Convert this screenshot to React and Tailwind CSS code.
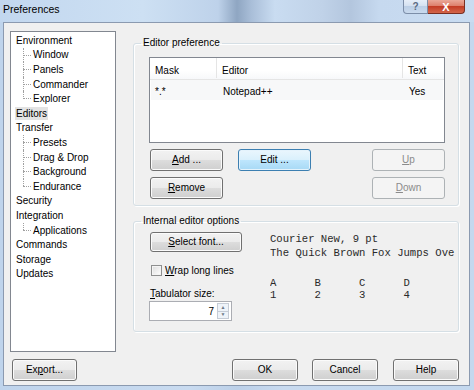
import React from "react";

const tree = [
  ["Environment", 0],
  ["Window", 1],
  ["Panels", 1],
  ["Commander", 1],
  ["Explorer", 2],
  ["Editors", 0, true],
  ["Transfer", 0],
  ["Presets", 1],
  ["Drag & Drop", 1],
  ["Background", 1],
  ["Endurance", 2],
  ["Security", 0],
  ["Integration", 0],
  ["Applications", 2],
  ["Commands", 0],
  ["Storage", 0],
  ["Updates", 0],
];

function Btn({ children, kind = "normal", className = "" }) {
  let cls =
    "border border-[#707070] rounded-[3px] bg-[linear-gradient(#f2f2f2_0%,#ebebeb_50%,#dddddd_50%,#cfcfcf_100%)] shadow-[inset_0_0_0_1px_#fbfbfb] text-black";
  if (kind === "focus")
    cls =
      "border border-[#3c7fb1] rounded-[3px] bg-[linear-gradient(#eaf6fd_0%,#d9f0fc_50%,#bee6fd_50%,#a7d9f5_100%)] shadow-[inset_0_0_0_1px_#e4f3fc] text-black";
  if (kind === "disabled")
    cls = "border border-[#adb2b5] rounded-[3px] bg-[#f4f4f4] text-[#8b8b8b]";
  return (
    <div className={`flex items-center justify-center leading-[12px] ${cls} ${className}`}>
      {children}
    </div>
  );
}

function TreeRow({ label, level, sel }) {
  if (level === 0) {
    return (
      <div className="h-[14.6px] flex items-center pl-[4px]">
        <span className={`px-[1px] leading-[13px] ${sel ? "bg-[#e3e3e3]" : ""}`}>{label}</span>
      </div>
    );
  }
  const last = level === 2;
  return (
    <div className="h-[14.6px] flex items-stretch pl-[12px]">
      <div className="relative w-[9px]">
        <div
          className={`absolute left-0 top-0 w-0 border-l border-dotted border-[#a0a0a0] ${
            last ? "h-[7.5px]" : "h-full"
          }`}
        ></div>
        <div className="absolute left-0 top-[7px] w-[8px] h-0 border-t border-dotted border-[#a0a0a0]"></div>
      </div>
      <span className="ml-[1px] self-center leading-[13px]">{label}</span>
    </div>
  );
}

export default function App() {
  return (
    <div className="w-[474px] h-[390px] overflow-hidden flex flex-col bg-[linear-gradient(90deg,#bfd4ec_0%,#c9dbf0_40%,#bcd0e8_50%,#c8daef_60%,#c4d8ee_100%)] font-['Liberation_Sans',Arial,sans-serif] text-[10px] text-black">
      {/* title bar */}
      <div className="h-[22px] flex items-start shrink-0 bg-[linear-gradient(90deg,#c2d7ef_0%,#cde0f3_30%,#bed2ea_46%,#8fa6c2_50%,#a9bed8_53%,#c9dcf1_58%,#c0d2e8_68%,#b3c6de_74%,#c6d9ef_80%,#c9dcf1_100%)]">
        <div className="pl-[3px] pt-[3px] text-[10.5px] leading-[12px] text-black">Preferences</div>
        <div className="ml-auto mr-[9px] flex">
          <div className="w-[25px] h-[14px] rounded-bl-[4px] border border-t-0 border-[#7c8ea8] bg-[linear-gradient(#e6eef8_0%,#d3e0f0_50%,#bccfe6_50%,#c9daee_100%)] flex items-center justify-center text-[10px] font-bold leading-[10px] text-[#5a6b82]">
            ?
          </div>
          <div className="w-[37px] h-[14px] rounded-br-[4px] border border-l-0 border-t-0 border-[#7a2f22] bg-[linear-gradient(#eaa898_0%,#dc7b66_50%,#c43d25_50%,#d3664a_100%)] flex items-center justify-center text-[11px] font-bold leading-[10px] text-white">
            X
          </div>
        </div>
      </div>

      {/* client area */}
      <div className="ml-[3px] mr-[4px] mb-[4px] flex-1 border border-[#8b9ab0] bg-[#f0f0f0] flex flex-col">
        <div className="flex pt-[8px] pl-[6px]">
          {/* tree */}
          <div className="w-[106px] h-[321px] border border-[#828790] bg-white pt-[1px] shrink-0">
            {tree.map(([l, lv, s]) => (
              <TreeRow key={l} label={l} level={lv} sel={s} />
            ))}
          </div>

          {/* right column */}
          <div className="ml-[17px] w-[326px] flex flex-col">
            <fieldset className="min-w-0 mt-[6px] border border-[#d5dfe5] rounded-[3px] shadow-[inset_1px_1px_0_#ffffff,1px_1px_0_#ffffff] pl-[15px] pr-[13px] pt-[8px] pb-[6px]">
              <legend className="-ml-[8px] px-[2px] leading-[12px]">Editor preference</legend>
              <div className="h-[86px] border border-[#828790] bg-white flex flex-col">
                <div className="h-[22px] flex items-end pb-[1px] bg-[linear-gradient(#ffffff_0%,#ffffff_60%,#f7f8fa_100%)] border-b border-[#e5e5e5]">
                  <div className="w-[67px] pl-[5px] h-full flex items-end border-r border-[#e5e5e5]">Mask</div>
                  <div className="w-[186px] pl-[5px] h-full flex items-end border-r border-[#e5e5e5]">Editor</div>
                  <div className="pl-[5px]">Text</div>
                </div>
                <div className="h-[20px] pt-[2px] flex items-center bg-[#f7f8f9] mx-[1px]">
                  <div className="w-[67px] pl-[4px]">*.*</div>
                  <div className="w-[186px] pl-[5px]">Notepad++</div>
                  <div className="pl-[5px]">Yes</div>
                </div>
              </div>
              <div className="mt-[6px] flex">
                <Btn className="w-[73px] h-[22px] ml-[1px]">
                  <span><u>A</u>dd ...</span>
                </Btn>
                <Btn kind="focus" className="w-[73px] h-[22px] ml-[15px]">
                  Edit ...
                </Btn>
                <Btn kind="disabled" className="w-[73px] h-[22px] ml-auto">
                  <span><u>U</u>p</span>
                </Btn>
              </div>
              <div className="mt-[6px] flex">
                <Btn className="w-[73px] h-[22px] ml-[1px]">
                  <span><u>R</u>emove</span>
                </Btn>
                <Btn kind="disabled" className="w-[73px] h-[22px] ml-auto">
                  <span><u>D</u>own</span>
                </Btn>
              </div>
            </fieldset>

            <fieldset className="min-w-0 mt-[9px] border border-[#d5dfe5] rounded-[3px] shadow-[inset_1px_1px_0_#ffffff,1px_1px_0_#ffffff] pl-[15px] pr-[3px] pt-[5px] pb-[10px]">
              <legend className="-ml-[8px] px-[2px] leading-[12px]">Internal editor options</legend>
              <div className="flex">
                <div className="w-[93px] shrink-0 flex flex-col">
                  <Btn className="w-[92px] h-[20px] ml-[1px]">
                    <span><u>S</u>elect font...</span>
                  </Btn>
                  <div className="mt-[12px] flex items-center h-[13px]">
                    <div className="ml-[2px] w-[11px] h-[11px] border border-[#8e8f8f] bg-[linear-gradient(135deg,#dcdcdc,#ffffff)] shadow-[inset_0_0_0_1px_#f4f4f4]"></div>
                    <span className="ml-[3px]"><u>W</u>rap long lines</span>
                  </div>
                  <div className="mt-[11px] leading-[12px] ml-[1px]">
                    <u>T</u>abulator size:
                  </div>
                  <div className="mt-[1px] w-[83px] h-[20px] border border-[#abadb3] bg-white flex items-center">
                    <span className="flex-1 text-right pr-[3px]">7</span>
                    <div className="w-[12px] h-[16px] mr-[2px] flex flex-col border border-[#c5ccd6] bg-[#eef3f9]">
                      <div className="flex-1 flex items-center justify-center text-[5px] leading-[5px] text-[#6f7a88]">▲</div>
                      <div className="flex-1 flex items-center justify-center text-[5px] leading-[5px] text-[#6f7a88] border-t border-[#c5ccd6]">▼</div>
                    </div>
                  </div>
                </div>
                <div className="ml-[28px] flex-1 min-w-0 overflow-hidden whitespace-pre font-['Liberation_Mono','Courier_New',monospace] text-[10.6px] text-[#2a2a2a]">
                  <div className="leading-[14px]">Courier New, 9 pt</div>
                  <div className="leading-[14px]">The Quick Brown Fox Jumps Over</div>
                  <div className="mt-[17px] leading-[12px]">A      B      C      D</div>
                  <div className="leading-[12px]">1      2      3      4</div>
                </div>
              </div>
            </fieldset>
          </div>
        </div>

        {/* bottom buttons */}
        <div className="mt-[7px] flex pl-[8px] pr-[10px]">
          <Btn className="w-[65px] h-[22px]">
            <span>Ex<u>p</u>ort...</span>
          </Btn>
          <Btn className="w-[66px] h-[22px] ml-auto">OK</Btn>
          <Btn className="w-[66px] h-[22px] ml-[14px]">Cancel</Btn>
          <Btn className="w-[66px] h-[22px] ml-[15px]">Help</Btn>
        </div>
      </div>
    </div>
  );
}
